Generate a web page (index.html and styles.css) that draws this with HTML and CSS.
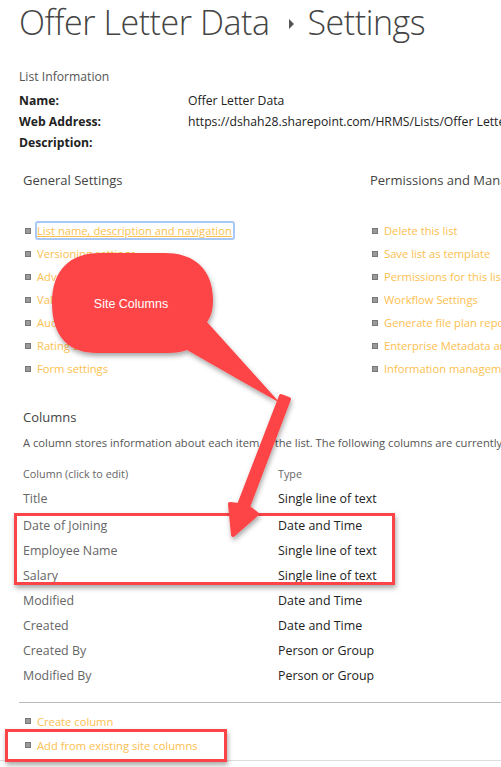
FILE: index.html
```html
<!DOCTYPE html>
<html>
<head>
<meta charset="utf-8">
<link rel="stylesheet" href="styles.css">
</head>
<body>
<div class="page">
  <h1 class="title"><span>Offer Letter Data</span><span class="sep"></span><span>Settings</span></h1>

  <section class="info">
    <div class="info-head">List Information</div>
    <div class="info-row"><span class="label">Name:</span><span class="value">Offer Letter Data</span></div>
    <div class="info-row"><span class="label">Web Address:</span><span class="value">https://dshah28.sharepoint.com/HRMS/Lists/Offer Letter Data/AllItems.aspx</span></div>
    <div class="info-row"><span class="label">Description:</span><span class="value"></span></div>
  </section>

  <section class="settings">
    <div class="settings-col">
      <div class="sec-head">General Settings</div>
      <ul class="links">
        <li><a class="focused">List name, description and navigation</a></li>
        <li><a>Versioning settings</a></li>
        <li><a>Advanced settings</a></li>
        <li><a>Validation settings</a></li>
        <li><a>Audience targeting settings</a></li>
        <li><a>Rating settings</a></li>
        <li><a>Form settings</a></li>
      </ul>
    </div>
    <div class="settings-col right">
      <div class="sec-head">Permissions and Management</div>
      <ul class="links">
        <li><a>Delete this list</a></li>
        <li><a>Save list as template</a></li>
        <li><a>Permissions for this list</a></li>
        <li><a>Workflow Settings</a></li>
        <li><a>Generate file plan report</a></li>
        <li><a>Enterprise Metadata and Keywords Settings</a></li>
        <li><a>Information management policy settings</a></li>
      </ul>
    </div>
  </section>

  <section class="columns">
    <div class="sec-head">Columns</div>
    <div class="desc">A column stores information about each item in the list. The following columns are currently available in this list:</div>
    <div class="col-table">
      <div class="col-row head"><span class="cname">Column (click to edit)</span><span class="ctype">Type</span></div>
      <div class="col-row first"><span class="cname">Title</span><span class="ctype">Single line of text</span></div>
      <div class="col-row"><span class="cname">Date of Joining</span><span class="ctype">Date and Time</span></div>
      <div class="col-row"><span class="cname">Employee Name</span><span class="ctype">Single line of text</span></div>
      <div class="col-row"><span class="cname">Salary</span><span class="ctype">Single line of text</span></div>
      <div class="col-row"><span class="cname">Modified</span><span class="ctype">Date and Time</span></div>
      <div class="col-row"><span class="cname">Created</span><span class="ctype">Date and Time</span></div>
      <div class="col-row"><span class="cname">Created By</span><span class="ctype">Person or Group</span></div>
      <div class="col-row"><span class="cname">Modified By</span><span class="ctype">Person or Group</span></div>
    </div>
    <hr class="rule">
    <ul class="links bottom">
      <li><a>Create column</a></li>
      <li><a>Add from existing site columns</a></li>
    </ul>
    <hr class="rule low">
  </section>
</div>

<div class="box box-cols"></div>
<div class="box box-add"></div>

<svg class="annot" width="501" height="767" viewBox="0 0 501 767">
  <defs>
    <filter id="sh" x="-20%" y="-20%" width="140%" height="140%">
      <feDropShadow dx="1" dy="3" stdDeviation="2.5" flood-color="#000" flood-opacity="0.35"/>
    </filter>
  </defs>
  <g filter="url(#sh)" fill="#fd4446">
    <path d="M100 253 H165 C195 253 213 270 213 300 C213 312 210 318 207 322 L280 403 L187 350 C182 352 176 353 168 353 H97 C70 353 52 338 52 303 C52 270 70 253 100 253 Z"/>
    <path d="M289 399 L248 507 L257 514 L233 535 L230 504 L239 505 L281 396 Z" stroke="#fd4446" stroke-width="4" stroke-linejoin="round"/>
  </g>
  <text x="131" y="308" class="callout-text">Site Columns</text>
</svg>
</body>
</html>
```
FILE: styles.css
```css
html, body {
  margin: 0;
  padding: 0;
  background: #fff;
}
body {
  font-family: "Open Sans", "Segoe UI", sans-serif;
  color: #444;
  width: 501px;
  height: 767px;
  overflow: hidden;
  position: relative;
}
.page {
  padding-left: 19px;
  white-space: nowrap;
  overflow: hidden;
  height: 767px;
}
.title {
  margin: 0;
  padding-top: 1px;
  font-weight: 300;
  font-size: 34px;
  line-height: 42px;
  color: #444;
  display: flex;
  align-items: center;
  letter-spacing: -0.45px;
}
.title .sep {
  display: inline-block;
  flex: none;
  width: 0;
  height: 0;
  border-top: 5px solid transparent;
  border-bottom: 5px solid transparent;
  border-left: 5px solid #555;
  margin: 4px 14px 0 19px;
}
.info {
  margin-top: 24px;
  font-size: 12.2px;
}
.info-head {
  color: #555;
  line-height: 20px;
  margin-bottom: 3px;
}
.info-row {
  display: flex;
  line-height: 21px;
  color: #222;
}
.info-row .label {
  width: 169px;
  flex: none;
  font-weight: 700;
}
.settings {
  display: grid;
  grid-template-columns: 347px 1fr;
  margin-top: 17px;
  padding-left: 4px;
  overflow: hidden;
}
.settings-col {
  overflow: hidden;
}
.sec-head {
  font-size: 13px;
  line-height: 20px;
  color: #444;
}
.links {
  list-style: none;
  margin: 29px 0 0 0;
  padding: 0;
  font-size: 11.2px;
}
.links li {
  display: flex;
  align-items: center;
  height: 23px;
}
.links li::before {
  content: "";
  width: 4px;
  height: 4px;
  background: #9a9a9a;
  border: 1px solid #777;
  margin: 0 6px 0 2px;
  flex: none;
}
.links a {
  color: #fdc04f;
  text-decoration: none;
}
.links a.focused {
  outline: 2px solid #a8c8f8;
  outline-offset: 0px;
  border-radius: 1px;
  text-decoration: underline;
  padding: 0 1px 0 0;
}
.columns {
  margin-top: 27px;
  padding-left: 4px;
}
.columns .desc {
  font-size: 11.2px;
  color: #555;
  margin-top: 6px;
  line-height: 20px;
  overflow: hidden;
}
.col-table {
  margin-top: 8px;
}
.col-row {
  display: flex;
  height: 25px;
  align-items: center;
  font-size: 12.4px;
}
.col-row.first {
  margin-bottom: 2px;
}
.col-row.head {
  font-size: 10.8px;
  color: #666;
}
.col-row .cname {
  width: 255px;
  flex: none;
  color: #666;
}
.col-row .ctype {
  color: #222;
}
.col-row.head .ctype {
  color: #666;
}
.rule {
  border: 0;
  border-top: 1px solid #bbb;
  margin: 14px 0 0 -4px;
}
.links.bottom {
  margin-top: 6px;
}
.links.bottom li {
  height: 24px;
}
.rule.low {
  margin-top: 3px;
  margin-left: -23px;
  border-top-color: #ddd;
}
.box {
  position: absolute;
  border: 3px solid #fb4448;
  box-shadow: 1px 3px 5px rgba(0,0,0,0.35);
}
.box-cols {
  left: 14px;
  top: 513px;
  width: 375px;
  height: 66px;
}
.box-add {
  left: 5px;
  top: 729px;
  width: 216px;
  height: 27px;
}
.annot {
  position: absolute;
  left: 0;
  top: 0;
  pointer-events: none;
}
.callout-text {
  font-family: "Liberation Sans", Arial, sans-serif;
  font-size: 12.5px;
  fill: #fff;
  text-anchor: middle;
}
```
